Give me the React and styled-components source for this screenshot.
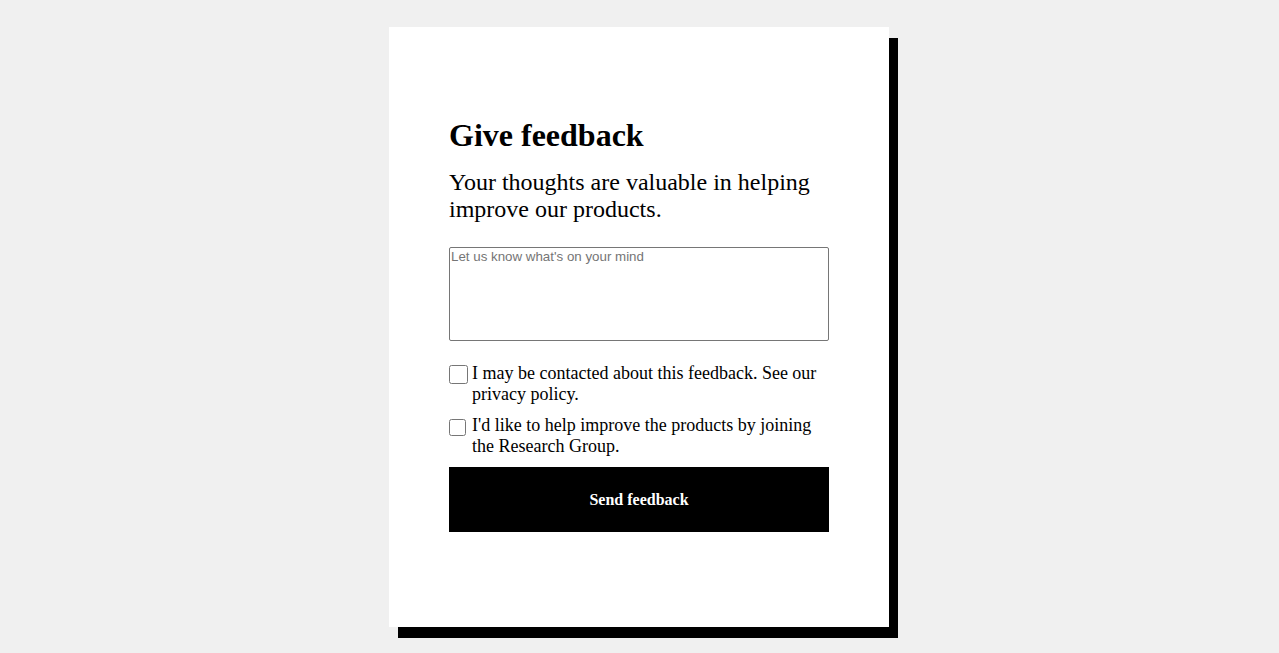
import React from 'react';
import styled, { createGlobalStyle } from 'styled-components';

const GlobalStyle = createGlobalStyle`
body {
    margin: 0;
    background-color: #f0f0f0;
    font-family: "Liberation Serif", "Times New Roman", serif;
}
`

const Page = styled.div`
display: flex;
justify-content: center;
padding: 27px 1px 26px 0;
min-height: 100vh;
box-sizing: border-box;
`

const Card = styled.div`
box-sizing: border-box;
width: 500px;
height: 600px;
padding: 0 60px;
background-color: #fff;
box-shadow: 9px 11px 0 #000;
display: flex;
flex-direction: column;
justify-content: center;
`

const Form = styled.form`
display: flex;
flex-direction: column;
margin-top: -5px;
`

const Title = styled.h1`
margin: 0;
font-size: 32px;
font-weight: 700;
color: #000;
`

const Subtitle = styled.p`
margin: 15px 0 24px;
font-size: 24px;
color: #000;
`

const Message = styled.textarea`
box-sizing: border-box;
width: 380px;
height: 94px;
margin: 0 0 22px;
padding: 1px;
border: 1px solid #767676;
border-radius: 2px;
resize: none;
font-family: "Liberation Sans", Arial, sans-serif;
font-size: 13.33px;
::placeholder {
    color: #757575;
}
`

const Option = styled.label`
display: grid;
grid-template-columns: 23px 1fr;
align-items: start;
font-size: 18px;
color: #000;
margin-bottom: ${props => props.gap}px;
`

const Check = styled.input`
margin: ${props => props.top}px 0 0 0;
width: ${props => props.size}px;
height: ${props => props.size}px;
`

const SendButton = styled.button`
width: 380px;
height: 65px;
border: none;
background-color: #000;
color: #fff;
font-family: "Liberation Serif", "Times New Roman", serif;
font-size: 16px;
font-weight: 700;
cursor: pointer;
`

export default function App() {
    return <Page>
        <GlobalStyle/>
        <Card>
            <Form onSubmit={e => e.preventDefault()}>
                <Title>Give feedback</Title>
                <Subtitle>Your thoughts are valuable in helping improve our products.</Subtitle>
                <Message placeholder="Let us know what's on your mind"/>
                <Option gap={10}>
                    <Check type="checkbox" size={19} top={2}/>
                    <span>I may be contacted about this feedback. See our privacy policy.</span>
                </Option>
                <Option gap={10}>
                    <Check type="checkbox" size={17} top={4}/>
                    <span>I'd like to help improve the products by joining the Research Group.</span>
                </Option>
                <SendButton type="submit">Send feedback</SendButton>
            </Form>
        </Card>
    </Page>
}
